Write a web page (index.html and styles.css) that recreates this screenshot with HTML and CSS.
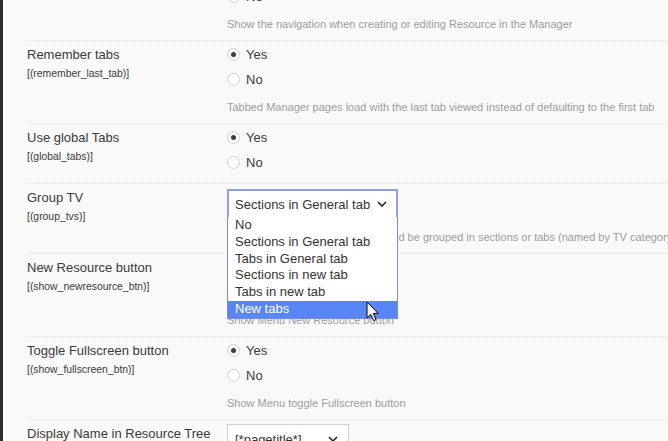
FILE: index.html
```html
<!DOCTYPE html>
<html lang="en">
<head>
<meta charset="utf-8">
<title>Manager settings</title>
<link rel="stylesheet" href="styles.css">
</head>
<body>
<div class="page">
  <div class="sidebar"></div>
  <main class="settings">
    <div class="row first">
      <div class="label"><div class="name">Resource navigation</div><div class="key">[(show_resource_nav)]</div></div>
      <div class="control">
        <div class="option"><span class="radio"></span>Yes</div>
        <div class="option"><span class="radio checked"></span>No</div>
        <div class="desc">Show the navigation when creating or editing Resource in the Manager</div>
      </div>
    </div>
    <div class="row">
      <div class="label"><div class="name">Remember tabs</div><div class="key">[(remember_last_tab)]</div></div>
      <div class="control">
        <div class="option"><span class="radio checked"></span>Yes</div>
        <div class="option"><span class="radio"></span>No</div>
        <div class="desc">Tabbed Manager pages load with the last tab viewed instead of defaulting to the first tab</div>
      </div>
    </div>
    <div class="row">
      <div class="label"><div class="name">Use global Tabs</div><div class="key">[(global_tabs)]</div></div>
      <div class="control">
        <div class="option"><span class="radio checked"></span>Yes</div>
        <div class="option"><span class="radio"></span>No</div>
      </div>
    </div>
    <div class="row">
      <div class="label"><div class="name">Group TV</div><div class="key">[(group_tvs)]</div></div>
      <div class="control">
        <div class="select focused wide">
          <span>Sections in General tab</span>
          <svg class="chev" width="10" height="6" viewBox="0 0 10 6"><path d="M1 1 L5 5 L9 1" fill="none" stroke="#222" stroke-width="1.6"/></svg>
          <ul class="dropdown">
            <li>No</li>
            <li>Sections in General tab</li>
            <li>Tabs in General tab</li>
            <li>Sections in new tab</li>
            <li>Tabs in new tab</li>
            <li class="active">New tabs</li>
            <svg class="cursor" width="13" height="21" viewBox="0 0 13 21"><path d="M1 1 L1 17 L4.8 13.4 L7.6 19.6 L10 18.6 L7.3 12.4 L12.2 12.4 Z" fill="#fff" stroke="#000" stroke-width="1" stroke-linejoin="round"/></svg>
          </ul>
        </div>
        <div class="desc after-select">Choose if Template Variables should be grouped in sections or tabs (named by TV category)</div>
      </div>
    </div>
    <div class="row">
      <div class="label"><div class="name">New Resource button</div><div class="key">[(show_newresource_btn)]</div></div>
      <div class="control">
        <div class="option"><span class="radio checked"></span>Yes</div>
        <div class="option"><span class="radio"></span>No</div>
        <div class="desc">Show Menu New Resource button</div>
      </div>
    </div>
    <div class="row">
      <div class="label"><div class="name">Toggle Fullscreen button</div><div class="key">[(show_fullscreen_btn)]</div></div>
      <div class="control">
        <div class="option"><span class="radio checked"></span>Yes</div>
        <div class="option"><span class="radio"></span>No</div>
        <div class="desc">Show Menu toggle Fullscreen button</div>
      </div>
    </div>
    <div class="row">
      <div class="label"><div class="name">Display Name in Resource Tree</div><div class="key">[(resource_tree_node_name)]</div></div>
      <div class="control">
        <div class="select narrow">
          <span>[*pagetitle*]</span>
          <svg class="chev" width="10" height="6" viewBox="0 0 10 6"><path d="M1 1 L5 5 L9 1" fill="none" stroke="#222" stroke-width="1.6"/></svg>
        </div>
      </div>
    </div>
  </main>
</div>
</body>
</html>
```

FILE: styles.css
```css
html, body {
  margin: 0;
  padding: 0;
  height: 100%;
  overflow: hidden;
  background: #f9f9f9;
  font-family: "Liberation Sans", Arial, sans-serif;
  color: #3a3a3a;
}

.page {
  display: flex;
  height: 100%;
}

.sidebar {
  width: 3px;
  flex: 0 0 3px;
  background: #2a2a2f;
}

.settings {
  flex: 1;
  margin-top: -43px;
  padding-left: 24px;
  min-width: 0;
}

.row {
  display: flex;
  border-top: 1px dotted #dedede;
  padding: 1px 0 8px;
}

.row.first {
  border-top-color: transparent;
}

.label {
  width: 200px;
  flex: 0 0 200px;
}

.name {
  font-size: 13px;
  line-height: 25px;
  white-space: nowrap;
}

.key {
  font-size: 10.4px;
  line-height: 14px;
  color: #3a3a3a;
}

.control {
  flex: 1;
  min-width: 0;
}

.option {
  display: flex;
  align-items: center;
  gap: 6px;
  height: 25px;
  font-size: 13px;
}

.radio {
  width: 13px;
  height: 13px;
  box-sizing: border-box;
  border: 1px solid #cfcfcf;
  border-radius: 50%;
  background: #fff;
  display: flex;
  align-items: center;
  justify-content: center;
}

.radio.checked::after {
  content: "";
  width: 5px;
  height: 5px;
  border-radius: 50%;
  background: #3c3c3c;
}

.desc {
  margin-top: 7px;
  font-size: 11px;
  line-height: 16px;
  color: #9c9c9c;
  white-space: nowrap;
}

.desc.after-select {
  margin-top: 10px;
}

.select {
  position: relative;
  box-sizing: border-box;
  height: 30px;
  margin-top: 4px;
  display: flex;
  align-items: center;
  justify-content: space-between;
  padding: 0 10px 0 7px;
  background: #fff;
  border: 1px solid #d0d0d0;
  font-size: 13px;
  color: #333;
}

.select.wide {
  width: 171px;
}

.select.narrow {
  width: 122px;
  margin-top: 3px;
}

.select.focused {
  border: 2px solid #8d9fec;
  padding-left: 6px;
  padding-right: 9px;
}

.chev {
  display: block;
}

.dropdown {
  position: absolute;
  left: -2px;
  right: -2px;
  top: 100%;
  margin: 0;
  padding: 0;
  list-style: none;
  background: #fff;
  border: 1px solid #7b8ad6;
  border-top: none;
  z-index: 5;
}

.dropdown li {
  height: 16.8px;
  line-height: 16.8px;
  padding-left: 7px;
  font-size: 13px;
  color: #333;
  white-space: nowrap;
}

.dropdown li.active {
  background: #5886f7;
  color: #fff;
}

.cursor {
  position: absolute;
  left: 138px;
  top: 84px;
}
```
